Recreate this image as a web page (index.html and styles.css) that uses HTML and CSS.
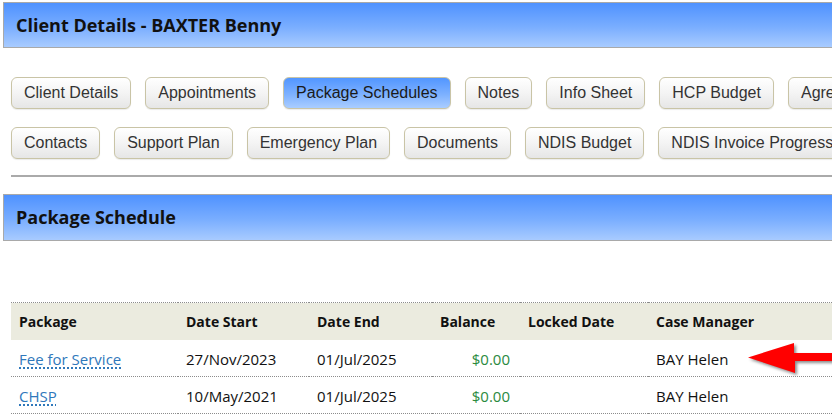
FILE: index.html
```html
<!DOCTYPE html>
<html lang="en">
<head>
<meta charset="utf-8">
<title>Client Details - BAXTER Benny</title>
<link rel="stylesheet" href="styles.css">
</head>
<body>
<div class="page">
  <div class="titlebar">Client Details - BAXTER Benny</div>

  <nav class="tabs">
    <div class="tab-row">
      <button class="tab">Client Details</button>
      <button class="tab">Appointments</button>
      <button class="tab active">Package Schedules</button>
      <button class="tab">Notes</button>
      <button class="tab">Info Sheet</button>
      <button class="tab">HCP Budget</button>
      <button class="tab">Agreements</button>
    </div>
    <div class="tab-row">
      <button class="tab">Contacts</button>
      <button class="tab">Support Plan</button>
      <button class="tab">Emergency Plan</button>
      <button class="tab">Documents</button>
      <button class="tab">NDIS Budget</button>
      <button class="tab">NDIS Invoice Progress</button>
    </div>
  </nav>

  <div class="divider"></div>

  <div class="titlebar section">Package Schedule</div>

  <table class="grid">
    <colgroup>
      <col class="c-pkg"><col class="c-start"><col class="c-end"><col class="c-bal"><col class="c-lock"><col class="c-mgr">
    </colgroup>
    <thead>
      <tr>
        <th>Package</th>
        <th>Date Start</th>
        <th>Date End</th>
        <th>Balance</th>
        <th>Locked Date</th>
        <th>Case Manager</th>
      </tr>
    </thead>
    <tbody>
      <tr>
        <td><a class="pkg-link" href="#">Fee for Service</a></td>
        <td>27/Nov/2023</td>
        <td>01/Jul/2025</td>
        <td class="money">$0.00</td>
        <td></td>
        <td>BAY Helen</td>
      </tr>
      <tr>
        <td><a class="pkg-link" href="#">CHSP</a></td>
        <td>10/May/2021</td>
        <td>01/Jul/2025</td>
        <td class="money">$0.00</td>
        <td></td>
        <td>BAY Helen</td>
      </tr>
    </tbody>
  </table>

  <svg class="arrow" width="100" height="50" viewBox="0 0 100 50" aria-hidden="true">
    <polygon points="8,22.5 54,8 54,18 100,18 100,26 55,26 55,38" fill="#ff0000"/>
  </svg>
</div>
</body>
</html>
```
FILE: styles.css
```css
html, body {
  margin: 0;
  padding: 0;
  overflow: hidden;
  background: #ffffff;
}

.page {
  position: relative;
  width: 1100px;
  padding: 2px 0 0 3px;
  font-family: "Open Sans", "Noto Sans", sans-serif;
  color: #111111;
}

.titlebar {
  height: 44px;
  line-height: 44px;
  border: 1px solid #a9a9a9;
  border-right: none;
  padding-left: 12px;
  background: linear-gradient(to bottom, #4f92ff 0%, #7aaeff 55%, #a8cbff 100%);
  font-weight: 700;
  font-size: 18px;
  color: #111111;
  white-space: nowrap;
}

.tabs {
  display: flex;
  flex-direction: column;
  gap: 18px;
  margin: 29px 0 0 8px;
}

.tab-row {
  display: flex;
  flex-wrap: nowrap;
  gap: 14px;
}

.tab {
  flex: none;
  height: 32px;
  padding: 0 12px;
  border: 1px solid #c9c4a6;
  border-radius: 6px;
  background: linear-gradient(to bottom, #ffffff 0%, #f4f4f4 50%, #e6e6e6 100%);
  box-shadow: 0 1px 1px rgba(0, 0, 0, 0.08);
  font-family: "Liberation Sans", Arial, sans-serif;
  font-size: 16px;
  color: #333333;
  white-space: nowrap;
  cursor: pointer;
}

.tab.active {
  background: linear-gradient(to bottom, #5296ff 0%, #7db1ff 55%, #aacdff 100%);
  color: #1a1a1a;
}

.divider {
  margin: 16px 0 0 8px;
  height: 0;
  border-top: 2px solid #aaaaaa;
}

.titlebar.section {
  margin-top: 17px;
  height: 45px;
  line-height: 45px;
}

.grid {
  margin: 61px 0 0 8px;
  width: 1089px;
  border-collapse: collapse;
  table-layout: fixed;
  border-top: 1px dotted #8c8c8c;
}

.c-pkg { width: 167px; }
.c-start { width: 131px; }
.c-end { width: 123px; }
.c-bal { width: 88px; }
.c-lock { width: 128px; }

.grid th {
  height: 37px;
  padding: 0 0 0 8px;
  background: #ebebdf;
  text-align: left;
  font-size: 14px;
  font-weight: 700;
  color: #111111;
}

.grid td {
  height: 35px;
  padding: 1px 0 0 8px;
  border-bottom: 1px dotted #8c8c8c;
  font-size: 15px;
  color: #111111;
  white-space: nowrap;
}

.grid td.money {
  text-align: right;
  padding-right: 10px;
  color: #2a8a3e;
}

.pkg-link {
  color: #2f78bb;
  text-decoration: underline dotted #2f78bb;
  text-decoration-thickness: 2px;
  text-underline-offset: 3px;
}

.arrow {
  position: absolute;
  left: 740px;
  top: 335px;
  filter: drop-shadow(2px 2px 1.5px rgba(0, 0, 0, 0.45));
}
```
